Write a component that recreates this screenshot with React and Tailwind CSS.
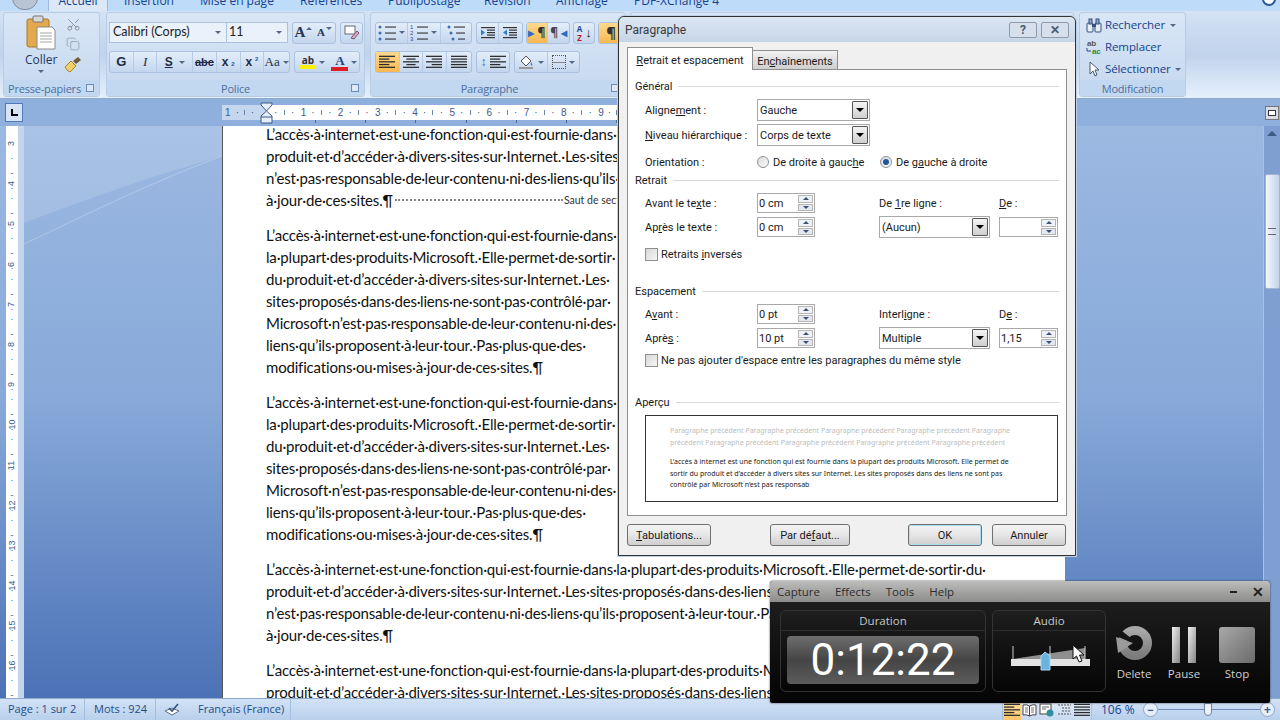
import { Scissors, Copy } from 'lucide-react'

const Caret = ({ className = '' }) => (
  <span className={`inline-block w-0 h-0 border-x-[3px] border-x-transparent border-t-[3px] border-t-[#54688a] ${className}`} />
)

const Lines = ({ align = 'left' }) => {
  const w = { left: [14, 9, 14, 9, 14], center: [14, 8, 14, 8, 14], right: [14, 9, 14, 9, 14], justify: [14, 14, 14, 14, 14] }[align]
  const x = (n) => (align === 'center' ? (14 - n) / 2 : align === 'right' ? 14 - n : 0)
  return (
    <svg width="16" height="14" viewBox="0 0 14 12">
      {w.map((n, i) => (
        <rect key={i} x={x(n)} y={i * 2.4 + 0.5} width={n} height="1.1" fill="#2b2b2b" />
      ))}
    </svg>
  )
}

const BulletIcon = ({ kind }) => (
  <svg width="18" height="16" viewBox="0 0 18 16">
    {[2, 8, 14].map((y, i) => (
      <g key={y}>
        {kind === 'num' ? (
          <text x="0" y={y + 2} fontSize="6" fill="#1f4d9c" fontFamily="Liberation Sans">{i + 1}</text>
        ) : (
          <circle cx={2 + (kind === 'multi' ? i * 2 : 0)} cy={y} r="1.5" fill="#3d6fb8" />
        )}
        <rect x={kind === 'multi' ? 7 + i * 2 : 7} y={y - 0.5} width={kind === 'multi' ? 11 - i * 2 : 11} height="1.1" fill="#333" />
      </g>
    ))}
  </svg>
)

const IndentIcon = ({ flip }) => (
  <svg width="16" height="14" viewBox="0 0 16 14">
    {[1, 3.5, 6, 8.5, 11].map((y) => (
      <rect key={y} x={y === 1 || y === 11 ? 1 : 7} y={y} width={y === 1 || y === 11 ? 14 : 8} height="1.2" fill="#333" />
    ))}
    <path d={flip ? 'M5 6.5 L1 3.5 V9.5 Z' : 'M1 6.5 L5 3.5 V9.5 Z'} fill="#2f7fd0" />
  </svg>
)

const GroupBtn = ({ children, className = '', active }) => (
  <div className={`flex items-center justify-center h-full gap-[3px] border-r border-[#b6cbe4] last:border-r-0 ${active ? 'bg-gradient-to-b from-[#fdd98d] to-[#f8b850]' : ''} ${className}`}>
    {children}
  </div>
)

const BtnGroup = ({ className = '', children }) => (
  <div className={`flex items-center h-[22px] rounded-[3px] border border-[#abc1de] bg-gradient-to-b from-[#e4eefa] to-[#c3d6ee] ${className}`}>
    {children}
  </div>
)

const RibbonGroup = ({ label, launcher, className = '', labelClassName = '', children }) => (
  <div className={`flex flex-col h-[85px] rounded-[3px] border border-[#b7cde6] bg-gradient-to-b from-[#d9e6f6] to-[#c6d8ef] ${className}`}>
    <div className="flex-1 min-h-0">{children}</div>
    <div className={`relative h-[16px] pt-[1px] flex items-center justify-center bg-[#c2d8f0] text-[11px] tracking-[-0.2px] leading-none text-[#4d6f9f] ${labelClassName}`}>
      {label}
      {launcher && (
        <span className="absolute right-[5px] top-[4px] w-[8px] h-[8px] border border-[#6d8bb4] bg-[#dce8f6]" />
      )}
    </div>
  </div>
)

const tabs = [
  ['Accueil', 'w-[60px] ml-[48px] mr-[16px]'],
  ['Insertion', 'w-[50px] mr-[26px]'],
  ['Mise en page', 'w-[72px] mr-[28px]'],
  ['Références', 'w-[60px] mr-[28px]'],
  ['Publipostage', 'w-[70px] mr-[26px]'],
  ['Révision', 'w-[46px] mr-[26px]'],
  ['Affichage', 'w-[50px] mr-[28px]'],
  ['PDF-XChange 4', 'w-[82px]'],
]

const Ribbon = () => (
  <div className="shrink-0 font-['Open_Sans',sans-serif]">
    <div className="relative flex h-[11px] overflow-hidden bg-[#bfdbfa]">
      <div className="absolute left-[12px] -top-[14px] w-[26px] h-[24px] rounded-full bg-[#b9c4d2] border border-[#7f8ea3]" />
      {tabs.map(([name, cls], i) => (
        <div
          key={name}
          className={`${cls} text-center text-[12px] leading-[20px] -mt-[9px] h-[20px] text-[#15428b] whitespace-nowrap ${
            i === 0 ? 'bg-[#dbe8f8] border-x border-[#9db9dc] rounded-t' : ''
          }`}
        >
          {name}
        </div>
      ))}
      <div className="absolute right-[4px] -top-[8px] w-[14px] h-[14px] rounded-full border-2 border-[#2a5a9c] bg-white" />
    </div>

    <div className="flex items-start h-[88px] pl-[3px] pt-[1px] gap-[5px] border-b border-[#8eaacb] bg-gradient-to-b from-[#d4e2f4] via-[#c0d3eb] to-[#e6f0fc]">
      {/* Presse-papiers */}
      <RibbonGroup label="Presse-papiers" launcher className="w-[97px]" labelClassName="justify-start pl-[4px]">
        <div className="flex h-full pl-[21px] pt-[2px] gap-[7px]">
          <div className="flex flex-col items-center">
            <svg width="32" height="36" viewBox="0 0 32 36">
              <rect x="2" y="4" width="22" height="28" rx="2" fill="#e3a94c" stroke="#a97829" />
              <rect x="8" y="1" width="10" height="6" rx="1" fill="#d8d8d8" stroke="#777" />
              <path d="M12 12 H27 L30 15 V34 H12 Z" fill="#fff" stroke="#8a8a8a" />
              <path d="M15 18 H27 M15 21 H27 M15 24 H27 M15 27 H27" stroke="#a5a5a5" />
            </svg>
            <span className="text-[12px] leading-[14px] mt-[2px] text-[#1e395b]">Coller</span>
            <Caret className="mt-[3px]" />
          </div>
          <div className="flex flex-col items-center gap-[5px] pt-[2px]">
            <Scissors size={15} className="text-[#8b8f96] -rotate-90" strokeWidth={1.5} />
            <Copy size={14} className="text-[#97a4b5]" strokeWidth={1.5} />
            <svg width="18" height="17" viewBox="0 0 18 17">
              <path d="M1 11 L7 5 L12 10 L6 16 Q3 15 1 11 Z" fill="#f2d267" stroke="#a5822b" />
              <path d="M9 5 L14 1 L17 4 L12 8 Z" fill="#74593a" />
            </svg>
          </div>
        </div>
      </RibbonGroup>

      {/* Police */}
      <RibbonGroup label="Police" launcher className="w-[259px] ml-[1px]">
        <div className="flex flex-col pt-[9px] pl-[2px] gap-[8px]">
          <div className="flex items-center h-[21px] font-['Lato',sans-serif]">
            <div className="flex items-center justify-between w-[118px] h-full pl-[3px] pr-[5px] bg-[#e9f1fb] border border-[#abc1de] text-[12.5px] text-[#222]">
              Calibri (Corps)
              <Caret />
            </div>
            <div className="flex items-center justify-between w-[61px] h-full pl-[2px] pr-[5px] bg-[#e9f1fb] border border-l-0 border-[#abc1de] text-[12.5px] text-[#222]">
              11
              <Caret />
            </div>
            <BtnGroup className="ml-[4px] w-[44px]">
              <GroupBtn className="w-1/2 border-r-0 font-['Liberation_Serif',serif] font-bold text-[15px] text-[#26364f]">A<Caret className="-mt-[8px] -ml-[2px] rotate-180" /></GroupBtn>
              <GroupBtn className="w-1/2 font-['Liberation_Serif',serif] font-bold text-[11px] text-[#26364f]">A<Caret className="-mt-[8px] -ml-[2px]" /></GroupBtn>
            </BtnGroup>
            <BtnGroup className="ml-[4px] w-[23px]">
              <GroupBtn className="w-full">
                <svg width="16" height="16" viewBox="0 0 16 16">
                  <rect x="1" y="1" width="10" height="8" fill="#fff" stroke="#667" />
                  <path d="M7 13 L13 6 L15 8 L10 14 Z" fill="#e7a7c0" stroke="#6a5a72" />
                </svg>
              </GroupBtn>
            </BtnGroup>
          </div>
          <div className="flex items-center h-[22px]">
            <BtnGroup className="w-[181px] text-[#1e2c44]">
              <GroupBtn className="w-[24px] font-bold text-[13px] font-['Liberation_Sans',sans-serif]">G</GroupBtn>
              <GroupBtn className="w-[24px] italic text-[13px] font-['Liberation_Serif',serif]">I</GroupBtn>
              <GroupBtn className="w-[36px] font-bold underline text-[12px] font-['Liberation_Sans',sans-serif]">S<Caret className="ml-[3px]" /></GroupBtn>
              <GroupBtn className="w-[24px] line-through text-[11px] font-bold font-['Liberation_Sans',sans-serif]">abc</GroupBtn>
              <GroupBtn className="w-[24px] font-bold text-[12px] font-['Liberation_Sans',sans-serif]">x<sub className="text-[6px] text-[#2a5a9c]">2</sub></GroupBtn>
              <GroupBtn className="w-[24px] font-bold text-[12px] font-['Liberation_Sans',sans-serif]">x<sup className="text-[6px] text-[#2a5a9c]">2</sup></GroupBtn>
              <GroupBtn className="w-[25px] text-[13px] font-['Liberation_Serif',serif]">Aa<Caret /></GroupBtn>
            </BtnGroup>
            <BtnGroup className="ml-[4px] w-[66px]">
              <GroupBtn className="w-[36px] border-r-0">
                <div className="flex flex-col items-center leading-none">
                  <span className="text-[10px] font-bold text-[#333]">ab</span>
                  <span className="w-[17px] h-[4px] bg-[#fff200]" />
                </div>
                <Caret />
              </GroupBtn>
              <GroupBtn className="w-[30px]">
                <div className="flex flex-col items-center leading-none">
                  <span className="text-[13px] font-bold text-[#1f3f80] font-['Liberation_Serif',serif]">A</span>
                  <span className="w-[17px] h-[4px] bg-[#e01c24]" />
                </div>
                <Caret />
              </GroupBtn>
            </BtnGroup>
          </div>
        </div>
      </RibbonGroup>

      {/* Paragraphe, runs on under the dialog */}
      <RibbonGroup label="Paragraphe" launcher className="w-[255px]" labelClassName="pr-[16px]">
        <div className="flex flex-col pt-[9px] pl-[4px] gap-[8px]">
          <div className="flex items-center h-[21px] gap-[3px]">
            <BtnGroup className="w-[97px]">
              <GroupBtn className="w-[33px]"><BulletIcon kind="dot" /><Caret /></GroupBtn>
              <GroupBtn className="w-[33px]"><BulletIcon kind="num" /><Caret /></GroupBtn>
              <GroupBtn className="w-[31px]"><BulletIcon kind="multi" /></GroupBtn>
            </BtnGroup>
            <BtnGroup className="w-[47px] ml-[1px]">
              <GroupBtn className="w-1/2"><IndentIcon flip /></GroupBtn>
              <GroupBtn className="w-1/2"><IndentIcon /></GroupBtn>
            </BtnGroup>
            <BtnGroup className="w-[45px]">
              <GroupBtn active className="w-1/2 text-[12px] font-bold text-[#333]"><span className="text-[#2a6cc0] text-[8px]">▶</span>¶</GroupBtn>
              <GroupBtn className="w-1/2 text-[12px] font-bold text-[#445]">¶<span className="text-[#2a6cc0] text-[8px]">◀</span></GroupBtn>
            </BtnGroup>
            <BtnGroup className="w-[22px]">
              <GroupBtn className="w-full text-[8px] leading-[9px] font-bold text-[#1f4d9c]">
                <span className="flex flex-col items-center"><span>A</span><span className="text-[#b01f1f]">Z</span></span>
                <span className="text-[13px] text-[#222] font-normal">↓</span>
              </GroupBtn>
            </BtnGroup>
            <BtnGroup className="w-[26px]">
              <GroupBtn active className="w-full text-[15px] font-bold text-[#333]">¶</GroupBtn>
            </BtnGroup>
          </div>
          <div className="flex items-center h-[22px] gap-[4px]">
            <BtnGroup className="w-[97px]">
              <GroupBtn active className="w-[24px]"><Lines /></GroupBtn>
              <GroupBtn className="w-[24px]"><Lines align="center" /></GroupBtn>
              <GroupBtn className="w-[24px]"><Lines align="right" /></GroupBtn>
              <GroupBtn className="w-[25px]"><Lines align="justify" /></GroupBtn>
            </BtnGroup>
            <BtnGroup className="w-[34px]">
              <GroupBtn className="w-full">
                <span className="text-[#2a6cc0] text-[12px] leading-none">↕</span>
                <Lines />
              </GroupBtn>
            </BtnGroup>
            <BtnGroup className="w-[66px]">
              <GroupBtn className="w-[34px]">
                <svg width="17" height="16" viewBox="0 0 17 16">
                  <path d="M3 7 L8 2 L13 7 L8 12 Z" fill="#fff" stroke="#555" />
                  <path d="M13 8 Q15 10 14 12 Q12 11 13 8" fill="#3f7fc8" />
                  <rect x="1" y="13" width="14" height="2" fill="#9a9a9a" />
                </svg>
                <Caret />
              </GroupBtn>
              <GroupBtn className="w-[32px]">
                <span className="w-[14px] h-[14px] border border-dotted border-[#555] bg-[linear-gradient(#888,#888)] bg-[length:100%_1px] bg-center bg-no-repeat" />
                <Caret />
              </GroupBtn>
            </BtnGroup>
          </div>
        </div>
      </RibbonGroup>

      {/* Style, hidden behind the dialog */}
      <RibbonGroup label="Style" className="w-[444px]" />

      {/* Modification */}
      <RibbonGroup label="Modification" className="w-[107px]">
        <div className="flex flex-col pl-[6px] pt-[1px] text-[11.5px] tracking-[-0.1px] leading-[22px] text-[#15428b]">
          <div className="flex items-center h-[22px] gap-[3px]">
            <svg width="16" height="15" viewBox="0 0 16 15">
              <rect x="1" y="5" width="6" height="9" rx="1" fill="#e7edf5" stroke="#35507c" />
              <rect x="9" y="5" width="6" height="9" rx="1" fill="#e7edf5" stroke="#35507c" />
              <rect x="3" y="1" width="3" height="5" fill="#8aa2c4" stroke="#35507c" />
              <rect x="10" y="1" width="3" height="5" fill="#8aa2c4" stroke="#35507c" />
              <rect x="6" y="6" width="4" height="3" fill="#35507c" />
            </svg>
            <span>Rechercher</span>
            <Caret className="ml-[2px]" />
          </div>
          <div className="flex items-center h-[22px] gap-[2px]">
            <svg width="17" height="16" viewBox="0 0 17 16">
              <text x="1" y="7" fontSize="8" fontWeight="bold" fill="#555" fontFamily="Liberation Sans">ab</text>
              <text x="6" y="15" fontSize="8" fontWeight="bold" fill="#1d8f3a" fontFamily="Liberation Sans">ac</text>
              <path d="M1 9 V12 H5" fill="none" stroke="#2b4f86" />
            </svg>
            <span>Remplacer</span>
          </div>
          <div className="flex items-center h-[22px] gap-[3px]">
            <svg width="16" height="16" viewBox="0 0 16 16">
              <path d="M4 1 V13 L7 10 L9 15 L11 14 L9 9 H13 Z" fill="#fff" stroke="#4a5a72" />
            </svg>
            <span>Sélectionner</span>
            <Caret className="ml-[1px]" />
          </div>
        </div>
      </RibbonGroup>
    </div>
  </div>
)

const RulerMarks = () => (
  <>
    <span>·</span>
    <span className="w-[1px] h-[5px] bg-[#6d86a8]" />
    <span>·</span>
  </>
)

const HRuler = () => (
  <div className="relative ml-[199px] flex h-[15px] w-[843px] self-center text-[10px] leading-none text-[#3d5a86] font-['Liberation_Sans',sans-serif]">
    <div className="shrink-0 w-[44px] h-full flex items-center justify-between bg-[#c5d7ee] pl-[3px] pr-[12px]">
      <span>1</span>
      <RulerMarks />
    </div>
    <div className="relative flex-1 min-w-0 flex items-center bg-white">
      {[1, 2, 3, 4, 5, 6, 7, 8, 9, 10, 11, 12, 13, 14, 15, 16, 17, 18, 19].map((n) => (
        <div key={n} className={`w-[40.2px] shrink-0 flex justify-between items-center ${n > 9 ? '-mr-[3px] pl-[7px]' : 'pl-[8px] -mr-[3px]'}`}>
          <RulerMarks />
          <span>{n}</span>
        </div>
      ))}
      <svg className="absolute -left-[6px] -top-[3px]" width="13" height="22" viewBox="0 0 13 22">
        <path d="M1 1 H12 V3 L6.5 9 L12 14 V21 H1 V14 L6.5 9 L1 3 Z" fill="#e6eef9" stroke="#3d5a86" />
        <path d="M1 15 H12" stroke="#3d5a86" />
      </svg>
    </div>
    {/* tab stops just below the ruler */}
    <div className="absolute left-[93px] -bottom-[3px] flex">
      {[0, 1, 2, 3, 4, 5, 6, 7, 8, 9, 10, 11, 12, 13, 14].map((n) => (
        <span key={n} className="w-[50.2px] h-[3px] border-l border-[#4f6a90]" />
      ))}
    </div>
  </div>
)

const VRuler = () => (
  <div className="shrink-0 w-[18px] ml-[6px] h-full bg-white border-r-[6px] border-[#c4d6ee] pt-[9px] overflow-hidden flex flex-col items-center text-[9px] leading-none text-[#3d5a86] font-['Liberation_Sans',sans-serif]">
    {[3, 4, 5, 6, 7, 8, 9, 10, 11, 12, 13, 14, 15, 16].map((n) => (
      <div key={n} className="h-[40.2px] shrink-0 flex flex-col items-center justify-start pt-[4px] gap-[6px]">
        <span className="-rotate-90 h-[12px] flex items-center">{n}</span>
        <span>·</span>
        <span>-</span>
        <span>·</span>
      </div>
    ))}
  </div>
)

const Para = ({ lines }) => (
  <div className="mb-[13px]">
    {lines.map((l, i) => (
      <div key={i} className="h-[22px] leading-[22px] whitespace-nowrap">{l}</div>
    ))}
  </div>
)

const narrow = [
  'L’accès·à·internet·est·une·fonction·qui·est·fournie·dans·',
  'la·plupart·des·produits·Microsoft.·Elle·permet·de·sortir·',
  'du·produit·et·d’accéder·à·divers·sites·sur·Internet.·Les·',
  'sites·proposés·dans·des·liens·ne·sont·pas·contrôlé·par·',
  'Microsoft·n’est·pas·responsable·de·leur·contenu·ni·des·',
  'liens·qu’ils·proposent·à·leur·tour.·Pas·plus·que·des·',
  'modifications·ou·mises·à·jour·de·ces·sites.¶',
]

const wide = [
  'L’accès·à·internet·est·une·fonction·qui·est·fournie·dans·la·plupart·des·produits·Microsoft.·Elle·permet·de·sortir·du·',
  'produit·et·d’accéder·à·divers·sites·sur·Internet.·Les·sites·proposés·dans·des·liens·ne·sont·pas·contrôlé·par·Microsoft·',
  'n’est·pas·responsable·de·leur·contenu·ni·des·liens·qu’ils·proposent·à·leur·tour.·Pas·plus·que·des·modifications·ou·mises·',
  'à·jour·de·ces·sites.¶',
]

const Workspace = () => (
  <div className="relative flex-1 min-h-0 flex flex-col bg-gradient-to-b from-[#9dbae2] via-[#88a9d9] to-[#4c72b6]">
    {/* ruler row */}
    <div className="shrink-0 h-[27px] flex items-center bg-[#8fafdc]">
      <div className="ml-[5px] w-[18px] h-[19px] flex items-center justify-center border border-[#4f79b8] bg-[#d5e3f5]">
        <span className="w-[7px] h-[7px] border-l-2 border-b-2 border-black" />
      </div>
      <HRuler />
      <div className="ml-auto mr-[1px] w-[14px] h-[14px] flex items-center justify-center border border-[#777] bg-[#d9dee6]">
        <span className="w-[8px] h-[6px] border border-[#333] bg-white" />
      </div>
    </div>

    <div className="relative flex-1 min-h-0 flex">
      <svg className="absolute left-[24px] top-0" width="198" height="230" viewBox="0 0 198 230">
        <path d="M0 97 C70 70 130 50 198 30 V0 H0 Z" fill="#fff" fillOpacity="0.14" />
        <path d="M0 118 C70 85 130 55 198 30" fill="none" stroke="#fff" strokeOpacity="0.25" />
      </svg>
      <VRuler />
      <div className="relative ml-[198px] w-[843px] h-full overflow-hidden bg-white border-l border-[#555] pl-[43px]">
        <div className="-mt-[3px] text-[15px] text-[#111] font-['Lato',sans-serif] tracking-[-0.18px]">
          <div className="mb-[13px]">
            <div className="h-[22px] leading-[22px] whitespace-nowrap">{wide[0]}</div>
            <div className="h-[22px] leading-[22px] whitespace-nowrap">{wide[1]}</div>
            <div className="h-[22px] leading-[22px] whitespace-nowrap">{wide[2]}</div>
            <div className="flex items-center h-[22px] leading-[22px] whitespace-nowrap">
              {wide[3]}
              <span className="w-[168px] ml-[2px] border-t-2 border-dotted border-[#888]" />
              <span className="text-[10.5px] tracking-normal ml-[1px] text-[#333]">Saut de section (continu)</span>
            </div>
          </div>
          <Para lines={narrow} />
          <Para lines={narrow} />
          <Para lines={wide} />
          <Para lines={wide} />
        </div>
      </div>
      {/* scrollbar */}
      <div className="ml-auto w-[17px] h-full flex flex-col items-center bg-[#7f9fd2] border-l border-[#a9c1e4]">
        <span className="mt-[5px] w-0 h-0 border-x-[5px] border-x-transparent border-b-[5px] border-b-[#3d5a86]" />
        <div className="mt-[38px] w-[15px] h-[115px] rounded-[2px] border border-[#9fb6d6] bg-gradient-to-r from-[#f4f7fc] to-[#c3d3e8] flex items-center justify-center">
          <span className="w-[8px] h-[7px] border-y border-[#667]" />
        </div>
      </div>
    </div>
  </div>
)

const StatusBar = () => (
  <div className="shrink-0 h-[22px] flex items-center text-[11px] whitespace-nowrap text-[#1f4d88] border-t border-[#8eaacb] bg-gradient-to-b from-[#d2e2f6] to-[#b9d0ec] font-['Open_Sans',sans-serif]">
    <div className="w-[85px] pl-[8px] h-full flex items-center border-r border-[#a5bedd]">Page : 1 sur 2</div>
    <div className="w-[71px] pl-[9px] h-full flex items-center border-r border-[#a5bedd]">Mots : 924</div>
    <div className="w-[135px] pl-[8px] h-full flex items-center gap-[17px] border-r border-[#a5bedd]">
      <svg width="17" height="14" viewBox="0 0 17 14">
        <path d="M1 8 L8 5 L15 8 L8 12 Z" fill="#fff" stroke="#5d6e86" />
        <path d="M5 5 L8 8 L14 1" fill="none" stroke="#31527f" strokeWidth="1.6" />
      </svg>
      Français (France)
    </div>
    <div className="ml-[711px] w-[90px] h-full flex items-center rounded-[2px] border-x border-[#a5bedd] bg-gradient-to-b from-[#e3edfa] to-[#c8daf1]">
      <div className="w-[18px] h-full flex items-center justify-center bg-gradient-to-b from-[#fde4a8] to-[#f8c468]"><Lines /></div>
      <div className="w-[18px] flex justify-center">
        <svg width="15" height="14" viewBox="0 0 15 14">
          <path d="M7.5 3 Q4 1 1 2 V12 Q4 11 7.5 13 Q11 11 14 12 V2 Q11 1 7.5 3 V13" fill="#fff" stroke="#444" />
          <path d="M3 5 H6 M3 7 H6 M3 9 H6 M9 5 H12 M9 7 H12 M9 9 H12" stroke="#777" />
        </svg>
      </div>
      <div className="w-[18px] flex justify-center">
        <svg width="15" height="14" viewBox="0 0 15 14">
          <rect x="1" y="1" width="11" height="10" fill="#fff" stroke="#444" />
          <path d="M3 4 H10 M3 6 H7" stroke="#666" />
          <circle cx="11" cy="10" r="3.5" fill="#2f8f9c" />
        </svg>
      </div>
      <div className="w-[18px] flex justify-center">
        <svg width="15" height="13" viewBox="0 0 15 13">
          <path d="M1 2 H14 M5 5 H14 M5 8 H14 M1 11 H14" stroke="#555" strokeDasharray="2 1" />
        </svg>
      </div>
      <div className="w-[18px] flex justify-center"><Lines align="justify" /></div>
    </div>
    <span className="ml-[9px] w-[36px] text-[12px] text-[#173f8c]">106 %</span>
    <span className="ml-[6px] w-[15px] h-[15px] rounded-full border border-[#8ea6c6] bg-[#e6eefa] flex items-center justify-center text-[11px] leading-none font-bold text-[#3d5a86]">−</span>
    <div className="relative w-[102px] h-[1px] bg-[#6f8db8]">
      <span className="absolute left-[46px] -top-[6px] w-[8px] h-[13px] rounded-b-[4px] border border-[#6b82a3] bg-[#eef3fa]" />
    </div>
    <span className="w-[15px] h-[15px] rounded-full border border-[#8ea6c6] bg-[#e6eefa] flex items-center justify-center text-[12px] leading-none font-bold text-[#3d5a86]">+</span>
  </div>
)

const T = ({ children, className = '' }) => <span className={`pt-[1px] ${className}`}>{children}</span>

const SectionTitle = ({ children, className = '' }) => (
  <div className={`flex items-center h-[14px] gap-[6px] ${className}`}>
    <span>{children}</span>
    <span className="flex-1 h-[1px] bg-[#d8d8d8]" />
  </div>
)

const Combo = ({ value, className = '' }) => (
  <div className={`h-[22px] flex items-center justify-between border border-[#a9a9a9] bg-white pl-[2px] pr-[1px] ${className}`}>
    <T>{value}</T>
    <span className="w-[16px] h-[18px] flex items-center justify-center border border-[#555] rounded-[1px] bg-gradient-to-b from-[#f5f5f5] to-[#cfcfcf]">
      <span className="w-0 h-0 border-x-[4px] border-x-transparent border-t-[4px] border-t-black" />
    </span>
  </div>
)

const Spin = ({ value, className = '' }) => (
  <div className={`h-[20px] flex items-center justify-between border border-[#a9a9a9] bg-white pl-[1px] pr-[1px] ${className}`}>
    <T>{value}</T>
    <span className="w-[15px] h-[16px] flex flex-col gap-[1px]">
      <span className="flex-1 flex items-center justify-center border border-[#b5b5b5] bg-[#eef1f6]">
        <span className="w-0 h-0 border-x-[3px] border-x-transparent border-b-[3px] border-b-[#3d4f7a]" />
      </span>
      <span className="flex-1 flex items-center justify-center border border-[#b5b5b5] bg-[#e3e7ee]">
        <span className="w-0 h-0 border-x-[3px] border-x-transparent border-t-[3px] border-t-[#3d4f7a]" />
      </span>
    </span>
  </div>
)

const Check = ({ children, className = '' }) => (
  <div className={`flex items-center h-[16px] ml-[10px] ${className}`}>
    <span className="w-[13px] h-[13px] mr-[3px] border border-[#8e8f8f] bg-gradient-to-br from-[#d8d8d8] to-[#f6f6f6]" />
    <T>{children}</T>
  </div>
)

const Radio = ({ on, children, className = '' }) => (
  <div className={`flex items-center ${className}`}>
    <span className="w-[12px] h-[12px] mr-[4px] rounded-full border border-[#8e8f8f] bg-gradient-to-br from-[#dcdcdc] to-[#fafafa] flex items-center justify-center">
      {on && <span className="w-[6px] h-[6px] rounded-full bg-[#1c5a9c]" />}
    </span>
    <T>{children}</T>
  </div>
)

const DlgButton = ({ children, className = '' }) => (
  <div className={`h-[22px] flex items-center justify-center rounded-[3px] border border-[#707070] bg-gradient-to-b from-[#f4f4f4] via-[#e6e6e6] to-[#cfcfcf] ${className}`}>
    <T>{children}</T>
  </div>
)

const Dialog = () => (
  <div className="absolute left-[618px] top-[16px] w-[458px] h-[540px] flex flex-col rounded-t-[6px] border border-[#333] bg-[#f0f0f0] text-[11px] leading-none text-[#1a1a1a] font-['Roboto',sans-serif] shadow-[0_0_0_1px_#bcd0e8]">
    <div className="h-[25px] shrink-0 flex items-center pl-[6px] pr-[6px] rounded-t-[6px] bg-gradient-to-b from-[#dce7f3] to-[#c6d5e6]">
      <span className="text-[12px] text-[#3a3a3a]">Paragraphe</span>
      <span className="ml-auto w-[28px] h-[16px] flex items-center justify-center border border-[#8d9aa8] rounded-[2px] bg-[#d5e0ec] text-[12px] font-bold text-[#4a5a6c]">?</span>
      <span className="ml-[4px] w-[28px] h-[16px] flex items-center justify-center border border-[#8d9aa8] rounded-[2px] bg-[#d5e0ec] text-[12px] font-bold text-[#4a5a6c]">✕</span>
    </div>

    <div className="flex items-end h-[27px] pl-[8px] shrink-0">
      <div className="relative z-10 w-[126px] h-[23px] -mb-[1px] pt-[3px] flex items-center justify-center border border-b-0 border-[#8f8f8f] bg-white">
        <span><u>R</u>etrait et espacement</span>
      </div>
      <div className="w-[85px] h-[19px] pt-[3px] flex items-center justify-center border border-l-0 border-b-0 border-[#8f8f8f] bg-gradient-to-b from-[#f2f2f2] to-[#cfcfcf]">
        <span>En<u>c</u>haînements</span>
      </div>
    </div>

    <div className="mx-[8px] h-[447px] border border-[#8f8f8f] bg-white pt-[9px] px-[7px] shrink-0">
      <SectionTitle>Général</SectionTitle>
      <div className="flex items-center h-[22px] mt-[6px] pl-[10px]">
        <T className="w-[112px]">Aligne<u>m</u>ent :</T>
        <Combo value="Gauche" className="w-[113px]" />
      </div>
      <div className="flex items-center h-[22px] mt-[3px] pl-[10px]">
        <T className="w-[112px]"><u>N</u>iveau hiérarchique :</T>
        <Combo value="Corps de texte" className="w-[113px]" />
      </div>
      <div className="flex items-center h-[16px] mt-[8px] pl-[10px]">
        <T className="w-[112px]">Orientation :</T>
        <Radio className="w-[123px]">De droite à gauc<u>h</u>e</Radio>
        <Radio on>De g<u>a</u>uche à droite</Radio>
      </div>

      <SectionTitle className="mt-[3px]">Retrait</SectionTitle>
      <div className="flex items-center h-[20px] mt-[6px] pl-[10px]">
        <T className="w-[112px]">Avant le te<u>x</u>te :</T>
        <Spin value="0 cm" className="w-[58px]" />
        <T className="ml-[64px] w-[120px]">De <u>1</u>re ligne :</T>
        <T><u>D</u>e :</T>
      </div>
      <div className="flex items-center h-[22px] mt-[3px] pl-[10px]">
        <T className="w-[112px]">Ap<u>r</u>ès le texte :</T>
        <Spin value="0 cm" className="w-[58px]" />
        <Combo value="(Aucun)" className="ml-[64px] w-[111px]" />
        <Spin value="" className="ml-[9px] w-[59px]" />
      </div>
      <Check className="mt-[8px]">Retraits <u>i</u>nversés</Check>

      <SectionTitle className="mt-[22px]">Espacement</SectionTitle>
      <div className="flex items-center h-[22px] mt-[5px] pl-[10px]">
        <T className="w-[112px]">A<u>v</u>ant :</T>
        <Spin value="0 pt" className="w-[58px]" />
        <T className="ml-[64px] w-[120px]">Interl<u>i</u>gne :</T>
        <T>D<u>e</u> :</T>
      </div>
      <div className="flex items-center h-[22px] mt-[2px] pl-[10px]">
        <T className="w-[112px]">Aprè<u>s</u> :</T>
        <Spin value="10 pt" className="w-[58px]" />
        <Combo value="Multiple" className="ml-[64px] w-[111px]" />
        <Spin value="1,15" className="ml-[9px] w-[59px]" />
      </div>
      <Check className="mt-[3px]">Ne pas a<u>j</u>outer d'espace entre les paragraphes du même style</Check>

      <SectionTitle className="mt-[27px]">Aperçu</SectionTitle>
      <div className="ml-[10px] mr-[1px] h-[87px] mt-[6px] border border-[#333] pl-[24px] pt-[9px] text-[7px] leading-[11.5px] whitespace-nowrap font-['Noto_Sans',sans-serif]">
        <div className="text-[#bdbdbd]">Paragraphe précédent Paragraphe précédent Paragraphe précédent Paragraphe précédent Paragraphe</div>
        <div className="text-[#bdbdbd]">précédent Paragraphe précédent Paragraphe précédent Paragraphe précédent Paragraphe précédent</div>
        <div className="mt-[8px]">L’accès à internet est une fonction qui est fournie dans la plupart des produits Microsoft. Elle permet de</div>
        <div>sortir du produit et d’accéder à divers sites sur Internet. Les sites proposés dans des liens ne sont pas</div>
        <div>contrôlé par Microsoft n’est pas responsab</div>
      </div>
    </div>

    <div className="flex items-center mt-[8px] px-[8px]">
      <DlgButton className="w-[84px]"><u>T</u>abulations...</DlgButton>
      <DlgButton className="ml-[59px] w-[80px]">Par dé<u>f</u>aut...</DlgButton>
      <DlgButton className="ml-[58px] w-[74px] border-[#3c8db8] shadow-[inset_0_0_0_1px_#a9def2]">OK</DlgButton>
      <DlgButton className="ml-[10px] w-[74px]">Annuler</DlgButton>
    </div>
  </div>
)

const Recorder = () => (
  <div className="absolute left-[770px] top-[581px] w-[500px] h-[122px] flex flex-col rounded-t-[3px] rounded-b-[2px] overflow-hidden bg-gradient-to-b from-[#232323] to-[#050505] font-['Open_Sans',sans-serif] shadow-[0_0_2px_#333]">
    <div className="h-[21px] shrink-0 flex items-center pl-[7px] text-[11.5px] text-[#2c2c2c] bg-gradient-to-b from-[#bdbdbb] to-[#8c8c8a]">
      <span className="mr-[15px]">Capture</span>
      <span className="mr-[15px]">Effects</span>
      <span className="mr-[15px]">Tools</span>
      <span>Help</span>
      <span className="ml-auto w-[7px] h-[2px] bg-[#222] mr-[15px]" />
      <span className="mr-[6px] text-[14px] leading-none font-bold text-[#222]">✕</span>
    </div>
    <div className="flex pt-[8px] pl-[10px]">
      <div className="w-[206px] h-[82px] flex flex-col rounded-[6px] border border-[#333] bg-gradient-to-b from-[#1e1e1e] to-[#060606]">
        <div className="h-[20px] shrink-0 flex items-center justify-center border-b border-[#2e2e2e] text-[11.5px] text-[#c8c8c8]">Duration</div>
        <div className="mx-[6px] mt-[5px] h-[48px] flex items-center justify-center rounded-[4px] bg-gradient-to-b from-[#6e6e6e] via-[#454545] to-[#5c5c5c] text-[44px] leading-none text-white font-['Roboto',sans-serif]">
          0:12:22
        </div>
      </div>
      <div className="ml-[6px] w-[114px] h-[82px] flex flex-col rounded-[6px] border border-[#333] bg-gradient-to-b from-[#1e1e1e] to-[#060606]">
        <div className="h-[20px] shrink-0 flex items-center justify-center border-b border-[#2e2e2e] text-[11.5px] text-[#c8c8c8]">Audio</div>
        <div className="relative flex-1">
          <svg className="absolute left-[18px] top-[12px]" width="80" height="28" viewBox="0 0 80 28">
            <path d="M2 16 L74 5 V16 Z" fill="#8e8e8e" />
            <path d="M2 3 V16 M39 3 V16 M74 3 V16" stroke="#cfcfcf" />
            <rect x="0" y="16" width="79" height="7" fill="#e2e2e2" />
            <path d="M30 13 L34 9 L39 13 V27 H30 Z" fill="#69b3dc" stroke="#a9daf2" />
          </svg>
          <svg className="absolute left-[79px] top-[13px]" width="14" height="19" viewBox="0 0 14 19">
            <path d="M1 1 V15 L4.5 12 L7 18 L10 17 L7.5 11 H12 Z" fill="#fff" stroke="#111" />
          </svg>
        </div>
      </div>
      <div className="w-[56px] flex flex-col items-center pt-[13px] text-[11.5px] leading-[16px] text-[#d0d0d0]">
        <svg width="38" height="38" viewBox="0 0 38 38">
          <defs>
            <linearGradient id="ring" x1="0" y1="0" x2="0" y2="1">
              <stop offset="0" stopColor="#a8a8a8" />
              <stop offset="1" stopColor="#7c7c7c" />
            </linearGradient>
          </defs>
          <circle cx="20" cy="20" r="12.5" fill="none" stroke="url(#ring)" strokeWidth="9" />
          <path d="M1 13 L7 8 L17 16 L15 19 Z" fill="#141414" />
          <path d="M1 14 L18 20 L3 30 Z" fill="#9a9a9a" />
        </svg>
        <span className="mt-[5px]">Delete</span>
      </div>
      <div className="w-[44px] flex flex-col items-center pt-[17px] text-[11.5px] leading-[16px] text-[#d0d0d0]">
        <div className="flex gap-[8px] h-[36px]">
          <span className="w-[8px] h-full bg-gradient-to-br from-[#f0f0f0] to-[#858585]" />
          <span className="w-[8px] h-full bg-gradient-to-br from-[#f0f0f0] to-[#858585]" />
        </div>
        <span className="mt-[3px]">Pause</span>
      </div>
      <div className="w-[62px] flex flex-col items-center pt-[17px] text-[11.5px] leading-[16px] text-[#d0d0d0]">
        <span className="w-[36px] h-[36px] rounded-[3px] bg-gradient-to-br from-[#a8a8a8] to-[#6c6c6c]" />
        <span className="mt-[3px]">Stop</span>
      </div>
    </div>
  </div>
)

export default function App() {
  return (
    <div className="relative w-[1280px] h-[720px] overflow-hidden flex flex-col">
      <Ribbon />
      <Workspace />
      <StatusBar />
      <Dialog />
      <Recorder />
    </div>
  )
}
